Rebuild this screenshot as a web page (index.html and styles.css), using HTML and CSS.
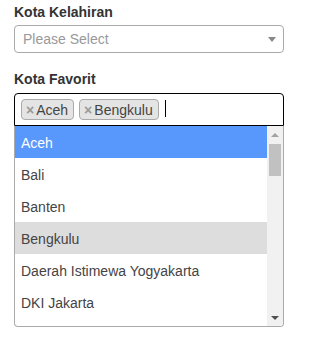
FILE: index.html
```html
<!DOCTYPE html>
<html>
<head>
<meta charset="utf-8">
<link rel="stylesheet" href="styles.css">
</head>
<body>
<div class="form">
  <label class="label label-first">Kota Kelahiran</label>
  <div class="single">
    <span class="placeholder">Please Select</span>
    <span class="arrow"></span>
  </div>
  <label class="label label-second">Kota Favorit</label>
  <div class="multi">
    <ul class="choices">
      <li class="choice"><span class="remove">×</span>Aceh</li>
      <li class="choice"><span class="remove">×</span>Bengkulu</li>
      <li class="cursor"></li>
    </ul>
  </div>
  <div class="dropdown">
    <ul class="options">
      <li class="option highlighted">Aceh</li>
      <li class="option">Bali</li>
      <li class="option">Banten</li>
      <li class="option selected">Bengkulu</li>
      <li class="option">Daerah Istimewa Yogyakarta</li>
      <li class="option">DKI Jakarta</li>
    </ul>
    <div class="scrollbar">
      <div class="sb-btn"><span class="sb-up"></span></div>
      <div class="sb-track"><div class="sb-thumb"></div></div>
      <div class="sb-btn"><span class="sb-down"></span></div>
    </div>
  </div>
</div>
</body>
</html>
```
FILE: styles.css
```css
* { box-sizing: border-box; }
html, body { margin: 0; padding: 0; background: #fff; }
body {
  font-family: "Liberation Sans", Arial, sans-serif;
  font-size: 14px;
  color: #444;
}
.form {
  width: 270px;
  margin-left: 14px;
  display: flex;
  flex-direction: column;
}
.label {
  display: block;
  font-weight: bold;
  color: #333;
  line-height: 20px;
  height: 20px;
}
.label-first { margin-top: 2px; margin-bottom: 3px; }
.label-second { margin-top: 16px; margin-bottom: 4px; }
.single {
  height: 28px;
  border: 1px solid #aaa;
  border-radius: 4px;
  display: flex;
  align-items: center;
  justify-content: space-between;
  padding: 0 7px 0 8px;
}
.placeholder {
  color: #999;
  line-height: 26px;
}
.arrow {
  width: 0;
  height: 0;
  border-left: 4px solid transparent;
  border-right: 4px solid transparent;
  border-top: 5px solid #888;
  margin-top: 1px;
}
.multi {
  height: 33px;
  border: 1px solid #000;
  border-radius: 4px 4px 0 0;
  padding: 5px 0 0 6px;
}
.choices {
  list-style: none;
  margin: 0;
  padding: 0;
  display: flex;
  align-items: flex-start;
}
.choice {
  height: 21px;
  line-height: 20px;
  background: #e4e4e4;
  border: 1px solid #aaa;
  border-radius: 4px;
  padding: 0 5px 0 4px;
  margin-right: 5px;
  color: #444;
  display: flex;
}
.remove {
  color: #999;
  font-weight: bold;
  margin-right: 2px;
}
.cursor {
  width: 1px;
  height: 17px;
  background: #000;
  margin-left: 1px;
  margin-top: 1px;
}
.dropdown {
  height: 201px;
  border: 1px solid #aaa;
  border-top: 0;
  border-radius: 0 0 4px 4px;
  display: flex;
  overflow: hidden;
}
.options {
  list-style: none;
  margin: 0;
  padding: 0;
  flex: 1;
  height: 200px;
  overflow: hidden;
}
.option {
  padding: 7px 6px 5px;
  line-height: 20px;
  height: 32px;
  color: #444;
  white-space: nowrap;
}
.option.highlighted { background: #5897fb; color: #fff; }
.option.selected { background: #ddd; }
.scrollbar {
  width: 16px;
  height: 200px;
  background: #f1f1f1;
  display: flex;
  flex-direction: column;
}
.sb-btn {
  height: 17px;
  display: flex;
  align-items: center;
  justify-content: center;
}
.sb-up {
  width: 0; height: 0;
  border-left: 4px solid transparent;
  border-right: 4px solid transparent;
  border-bottom: 4px solid #a3a3a3;
}
.sb-down {
  width: 0; height: 0;
  border-left: 4px solid transparent;
  border-right: 4px solid transparent;
  border-top: 4px solid #505050;
}
.sb-track {
  flex: 1;
  padding: 1px 2px;
}
.sb-thumb {
  height: 32px;
  background: #c1c1c1;
}
```
